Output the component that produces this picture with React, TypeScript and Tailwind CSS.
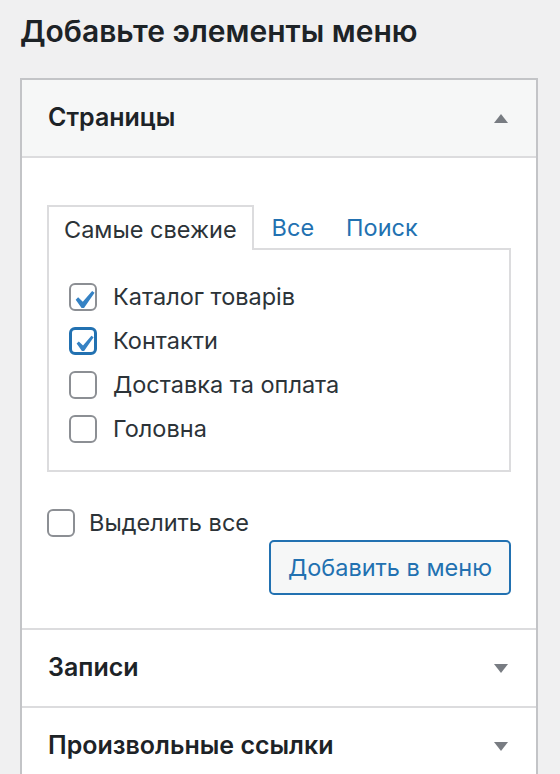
import React from 'react';

const FONT = { fontFamily: 'Inter, "Noto Sans", "Liberation Sans", sans-serif' };

function Triangle({ up }: { up?: boolean }) {
  return (
    <svg width="14" height="9" viewBox="0 0 14 9" className="text-[#787c82]">
      {up ? <polygon points="7,0 14,9 0,9" fill="currentColor" /> : <polygon points="0,0 14,0 7,9" fill="currentColor" />}
    </svg>
  );
}

function Checkbox({ checked, focused }: { checked?: boolean; focused?: boolean }) {
  return (
    <span
      className={`flex h-[28px] w-[28px] flex-shrink-0 items-center justify-center rounded-[6px] bg-white pl-[4px] pt-[4px] ${
        focused ? 'border-[3px] border-[#2271b1]' : 'border-2 border-[#8c8f94]'
      }`}
    >
      {checked && (
        <svg width="23" height="21" viewBox="5.4 4.6 11 10">
          <path d="M14.83 4.89l1.34.94-5.81 8.38H9.02L5.78 9.67l1.34-1.25 2.57 2.4z" fill="#3582c4" />
        </svg>
      )}
    </span>
  );
}

function SectionHeader({ title, open }: { title: string; open?: boolean }) {
  return (
    <div className={`flex h-[76px] items-center justify-between pl-[26px] pr-[28px] ${open ? 'bg-[#f6f7f7]' : 'bg-white'}`}>
      <h3 className="text-[25px] font-semibold text-[#1d2327]">{title}</h3>
      <Triangle up={open} />
    </div>
  );
}

const PAGES = [
  { label: 'Каталог товарів', checked: true },
  { label: 'Контакти', checked: true, focused: true },
  { label: 'Доставка та оплата' },
  { label: 'Головна' },
];

export default function App() {
  return (
    <div className="min-h-screen overflow-hidden bg-[#f0f0f1] pl-[20px] pt-[14px]" style={FONT}>
      <h2 className="mb-[30px] text-[30px] leading-[34px] font-semibold text-[#1d2327]">Добавьте элементы меню</h2>

      <div className="w-[518px] border-2 border-b-0 border-[#c3c4c7] bg-white">
        {/* Pages — expanded */}
        <SectionHeader title="Страницы" open />
        <div className="border-t-2 border-[#dcdcde] px-[25px] pt-[47px] pb-[33px]">
          <div className="flex items-end text-[23.5px]">
            <span className="relative z-10 -mb-[2px] h-[45px] border-2 border-b-0 border-[#dcdcde] bg-white px-[15px] pt-[5px] text-[#2c3338]">
              Самые свежие
            </span>
            <span className="h-[43px] pl-[18px] pr-[32px] pt-[5px] text-[#2271b1]">Все</span>
            <span className="h-[43px] pt-[5px] text-[#2271b1]">Поиск</span>
          </div>
          <div className="border-2 border-[#dcdcde] pl-[20px] pt-[25px] pb-[19px]">
            {PAGES.map((p) => (
              <label key={p.label} className="flex h-[44px] items-center gap-[16px] text-[23.5px] text-[#2c3338]">
                <Checkbox checked={p.checked} focused={p.focused} />
                {p.label}
              </label>
            ))}
          </div>
          <label className="mt-[37px] flex h-[28px] items-center gap-[14px] text-[23.5px] leading-[28px] text-[#2c3338]">
            <Checkbox />
            Выделить все
          </label>
          <div className="mt-[3px] flex justify-end">
            <button
              type="button"
              className="h-[55px] rounded-[5px] border-2 border-[#2271b1] bg-[#f6f7f7] px-[17px] text-[23.5px] text-[#2271b1]"
            >
              Добавить в меню
            </button>
          </div>
        </div>

        <div className="border-t-2 border-[#dcdcde]">
          <SectionHeader title="Записи" />
        </div>
        <div className="border-t-2 border-[#dcdcde]">
          <SectionHeader title="Произвольные ссылки" />
        </div>
      </div>
    </div>
  );
}
